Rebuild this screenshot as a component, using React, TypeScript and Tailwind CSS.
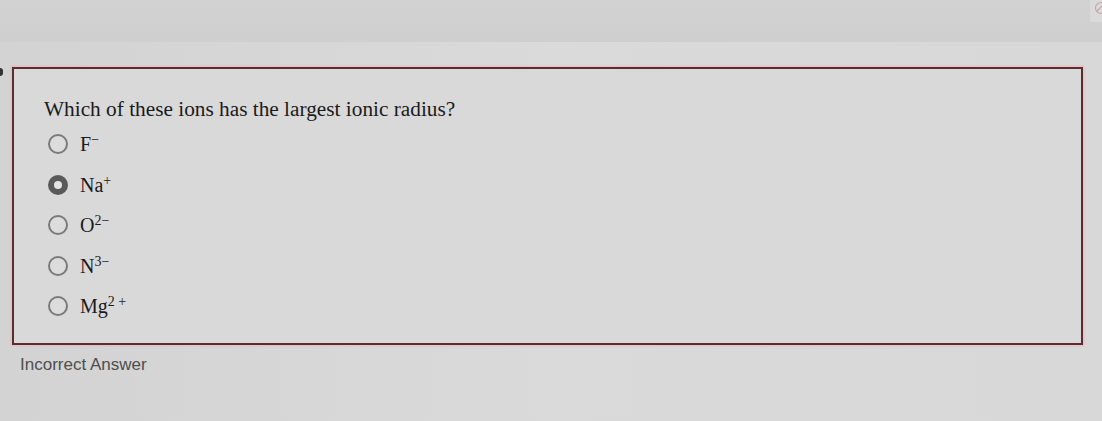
import React from 'react'

type Option = { base: string; sup: string; selected?: boolean }

const options: Option[] = [
  { base: 'F', sup: '−' },
  { base: 'Na', sup: '+', selected: true },
  { base: 'O', sup: '2−' },
  { base: 'N', sup: '3−' },
  { base: 'Mg', sup: '2 +' },
]

function Radio({ selected }: { selected?: boolean }) {
  if (selected) {
    return (
      <span className="flex h-[20px] w-[20px] items-center justify-center rounded-full bg-[#5a5a5a]">
        <span className="h-[8px] w-[8px] rounded-full bg-[#e4e4e4]" />
      </span>
    )
  }
  return <span className="h-[20px] w-[20px] rounded-full border-2 border-[#7a7a7a] bg-[#dcdcdc]" />
}

export default function App() {
  return (
    <div className="relative h-[421px] w-[1102px] overflow-hidden bg-[#d6d6d6] font-['Liberation_Serif',serif]">
      {/* top strip */}
      <div className="relative h-[42px] bg-gradient-to-b from-[#d2d2d2] to-[#cfcfcf]">
        <div className="absolute right-0 top-0 h-[22px] w-[12px] bg-[#dadada]" />
        <svg className="absolute right-[-6px] top-[1px]" width="14" height="14" viewBox="0 0 14 14">
          <circle cx="7" cy="7" r="5.5" fill="none" stroke="#c9a6a6" strokeWidth="1.2" />
          <path d="M3 10 L10 3" stroke="#c9a6a6" strokeWidth="1.2" />
        </svg>
      </div>

      <div className="absolute left-0 top-[68px] h-[8px] w-[3px] rounded-r bg-[#333]" />

      <div className="bg-gradient-to-r from-[#d3d3d3] via-[#dadada] to-[#d8d8d8] pt-[25px]">
        {/* question card */}
        <div className="ml-[12px] h-[278px] w-[1071px] border-2 border-[#5b2d31] bg-[#d9d9d9] pl-[30px] pt-[28px] shadow-[0_0_2px_1px_#e8b9b9]">
          <p className="text-[21.3px] leading-[24px] text-[#1b1b1b]">
            Which of these ions has the largest ionic radius?
          </p>
          <div className="flex flex-col pt-[3px]">
            {options.map((o) => (
              <div key={o.base} className="flex h-[40.5px] items-center gap-[12px] pl-[4px]">
                <Radio selected={o.selected} />
                <span className="text-[20px] leading-none text-[#1b1b1b]">
                  {o.base}
                  <sup className="text-[14px]">{o.sup}</sup>
                </span>
              </div>
            ))}
          </div>
        </div>

        <p className="ml-[20px] mt-[11px] pb-[50px] font-['Liberation_Sans',sans-serif] text-[17px] leading-[18px] text-[#4e4e4e]">
          Incorrect Answer
        </p>
      </div>
    </div>
  )
}
